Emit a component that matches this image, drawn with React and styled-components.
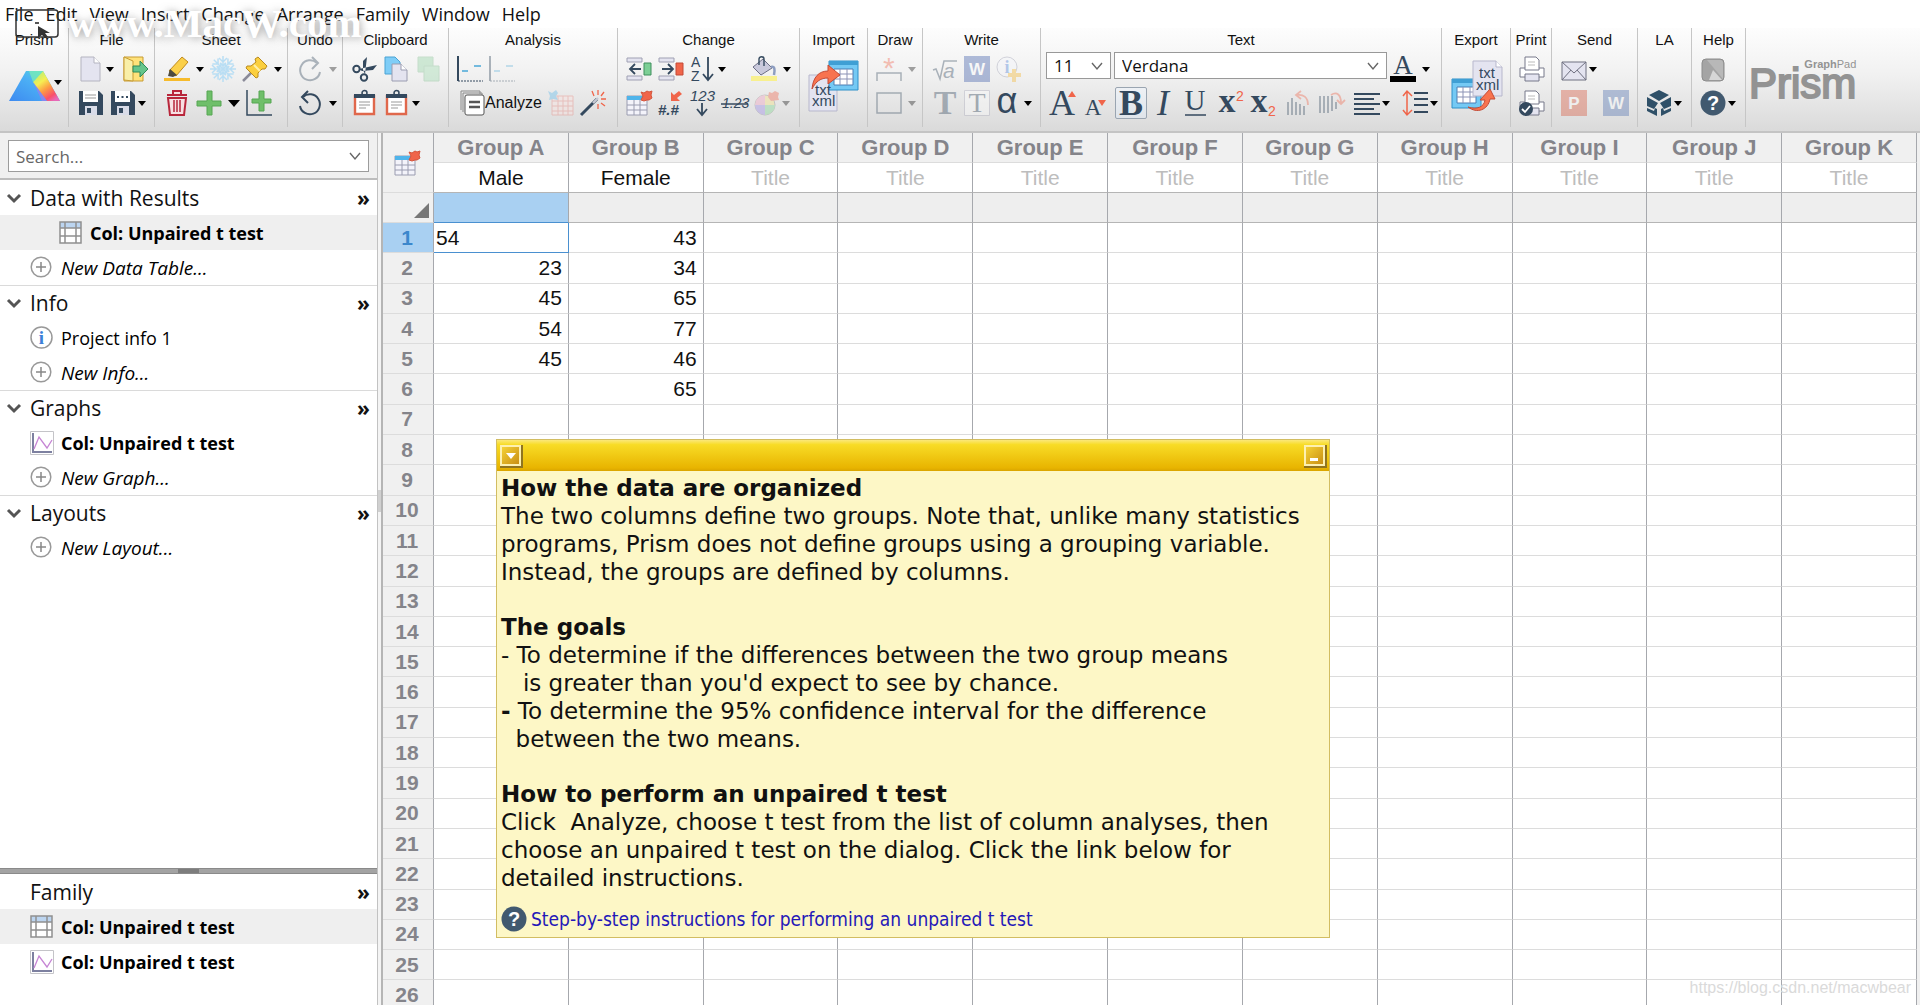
import React from "react";
import styled, { createGlobalStyle, css } from "styled-components";

const GlobalStyle = createGlobalStyle`
  * {
    box-sizing: border-box;
  }
  body {
    margin: 0;
    background: #fff;
    color: #111;
    font-family: "Open Sans", "Noto Sans", sans-serif;
    overflow: hidden;
  }
  button, input, select {
    margin: 0;
    padding: 0;
    border: 0;
    border-radius: 0;
    background: none;
    color: inherit;
    font: inherit;
  }
  svg {
    display: block;
    flex: none;
    overflow: visible;
  }
`;

const navy = "#34495e";
const red = "#f0654a";
const lilac = "#e4e4f0";
const edge = "#9a9cb0";

/* ---------- layout ---------- */

const Window = styled.div`
  display: flex;
  flex-direction: column;
  height: 100vh;
`;

const MenuBar = styled.nav`
  display: flex;
  gap: 12px;
  height: 28px;
  padding-left: 5px;
  flex: none;
  button {
    font-size: 18px;
    line-height: 28px;
  }
`;

const Ribbon = styled.header`
  display: flex;
  flex: none;
  height: 105px;
  padding-bottom: 4px;
  background: linear-gradient(#fdfdfd, #f1f1f1 45%, #dadada);
  border-bottom: 2px solid #c4c4c4;
`;

const GroupBox = styled.section`
  width: ${p => p.$w}px;
  flex: none;
  border-right: 1px solid #c6c6c6;
`;

const GroupTitle = styled.h2`
  margin: 0;
  font: 15px/24px "Liberation Sans", Arial, sans-serif;
  text-align: center;
`;

const Row = styled.div`
  display: flex;
  align-items: center;
  gap: ${p => p.$gap || 6}px;
  height: ${p => (p.$tall ? 68 : 34)}px;
  padding: 0 8px 0 ${p => p.$pad || 9}px;
`;

const Cluster = styled.div`
  display: flex;
  align-items: center;
  gap: 6px;
`;

const Spacer = styled.span`
  flex: 1;
`;

const Tool = styled.button`
  display: flex;
  align-items: center;
  justify-content: center;
  flex: none;
  min-width: 26px;
  height: 28px;
  opacity: ${p => (p.$dim ? 0.38 : 1)};
  ${p =>
    p.$on &&
    css`
      width: 32px;
      height: 32px;
      margin: 0 -3px;
      border: 1px solid #9aa5b1;
      border-radius: 2px;
      background: linear-gradient(#eef1f5, #dfe4ea);
    `}
`;

const AnalyzeButton = styled(Tool)`
  font: 16px "Liberation Sans", Arial, sans-serif;
`;

const DropButton = styled.button`
  width: ${p => (p.$wide ? 12 : 8)}px;
  height: 28px;
  flex: none;
  margin: ${p => (p.$tight ? "0 2px 0 -4px" : "0")};
  opacity: ${p => (p.$dim ? 0.35 : 1)};
  &::before {
    content: "";
    display: block;
    border-style: solid;
    border-color: #000 transparent transparent;
    border-width: ${p => (p.$wide ? "7px 6px 0" : "5px 4px 0")};
  }
`;

/* the Prism arrow sits over the slope of the logo */
const LogoDrop = styled(DropButton)`
  margin: 0 0 8px -13px;
`;

const Field = styled.div`
  display: flex;
  align-items: center;
  position: relative;
  align-self: flex-start;
  width: ${p => p.$w}px;
  height: 27px;
  border: 1px solid #999;
  background: #fff;
  select {
    width: 100%;
    height: 25px;
    padding-left: 7px;
    appearance: none;
    font-size: 17px;
    outline: 0;
  }
  svg {
    position: absolute;
    right: 7px;
    pointer-events: none;
  }
`;

const Brand = styled.div`
  padding: 30px 0 0 3px;
  color: #939393;
  font-family: "Liberation Sans", Arial, sans-serif;
  p {
    margin: 0;
    text-align: right;
    font-size: 11px;
    line-height: 12px;
    font-weight: bold;
  }
  span {
    font-weight: normal;
  }
  strong {
    display: block;
    font-size: 42px;
    font-weight: normal;
    line-height: 28px;
    -webkit-text-stroke: 2px #939393;
  }
`;

const Workspace = styled.main`
  display: flex;
  flex: 1;
  min-height: 0;
`;

const Sidebar = styled.aside`
  display: flex;
  flex-direction: column;
  width: 377px;
  flex: none;
`;

const SearchBar = styled.div`
  padding: 7px 8px 6px;
  background: #f0f0f0;
  border-bottom: 2px solid #bdbdbd;
`;

const SearchBox = styled.label`
  display: flex;
  align-items: center;
  height: 32px;
  padding: 0 7px;
  border: 1px solid #9c9c9c;
  background: #fff;
  input {
    flex: 1;
    font-size: 17px;
    outline: 0;
  }
  input::placeholder {
    color: #666;
    opacity: 1;
  }
`;

const Tree = styled.div`
  flex: 1;
`;

const SectionHead = styled.div`
  display: flex;
  align-items: center;
  height: 35px;
  padding: 0 7px 0 7px;
  h3 {
    flex: 1;
    margin: 0 0 0 9px;
    font-size: 21px;
    font-weight: normal;
    line-height: 34px;
  }
  button {
    font-size: 21px;
    font-weight: bold;
    line-height: 28px;
  }
`;

const Section = styled.section`
  & + & ${SectionHead} {
    border-top: 1px solid #dadada;
  }
`;

const Blank = styled.span`
  width: 14px;
`;

const Item = styled.button`
  display: flex;
  align-items: center;
  gap: 8px;
  width: 100%;
  height: 35px;
  padding-left: ${p => (p.$deep ? 59 : 30)}px;
  font-size: ${p => (p.$italic ? 19 : 18)}px;
  font-weight: ${p => (p.$bold ? "bold" : "normal")};
  font-style: ${p => (p.$italic ? "italic" : "normal")};
  color: #000;
  background: ${p => (p.$active ? "#efefef" : "none")};
`;

const PaneDivider = styled.div`
  height: 6px;
  background: #a3a3a3;
  border-top: 1px solid #8a8a8a;
  border-bottom: 1px solid #8a8a8a;
  &::before {
    content: "";
    display: block;
    width: 21px;
    height: 4px;
    margin: 0 auto;
    background: #7d7d7d;
  }
`;

const FamilyPane = styled.div`
  height: 131px;
`;

const Splitter = styled.div`
  display: flex;
  align-items: center;
  width: 6px;
  flex: none;
  padding-bottom: 137px;
  border-left: 1px solid #c2c2c2;
  border-right: 2px solid #b5b5b5;
  background: #f4f4f4;
  &::before {
    content: "";
    width: 4px;
    height: 22px;
    background: #d0d0d0;
  }
`;

const Sheet = styled.div`
  position: relative;
  flex: 1;
  overflow: hidden;
  padding-right: 3px;
  background: #f0f0f0;
`;

const Grid = styled.table`
  width: 100%;
  height: calc(100% + 6px);
  table-layout: fixed;
  border-collapse: separate;
  border-spacing: 0;
  background: #fff;
  font: 21px/24px "Liberation Sans", Arial, sans-serif;
  th,
  td {
    height: 30px;
    padding: 0 6px 0 0;
    border-right: 1px solid #a6a8ad;
    border-bottom: 1px solid #dcdcdc;
    text-align: right;
  }
`;

const NumberCol = styled.col`
  width: 51px;
`;

const CornerCell = styled.th`
  background: #f0f0f0;
  && {
    padding: 0 0 0 11px;
  }
`;

const SelectAll = styled.th`
  background: #f0f0f0;
  &::before {
    content: "";
    display: block;
    margin: 6px 0 0 31px;
    width: 0;
    border-style: solid;
    border-width: 0 0 15px 15px;
    border-color: transparent transparent #777;
  }
  && {
    padding: 0;
  }
`;

const GroupHead = styled.th`
  color: #84848a;
  background: #f0f0f0;
  font-size: 22px;
  && {
    padding: 0;
    text-align: center;
  }
`;

const TitleCell = styled.td`
  color: ${p => (p.$empty ? "#bdbdbd" : "#111")};
  && {
    padding: 0;
    text-align: center;
    border-bottom-color: #b5b5b5;
  }
`;

const SubHead = styled.td`
  background: ${p => (p.$active ? "#a9d0f2" : "#eeeeee")};
  && {
    border-bottom-color: ${p => (p.$active ? "#4a90d0" : "#b5b5b5")};
  }
`;

const RowHead = styled.th`
  color: ${p => (p.$active ? "#3b87cc" : "#84848a")};
  background: ${p => (p.$active ? "#a9d0f2" : "#f0f0f0")};
  && {
    padding: 0 2px 0 0;
    text-align: center;
  }
`;

const EditCell = styled.td`
  && {
    padding: 0;
    border-color: #4a90d0;
  }
  input {
    display: block;
    width: 100%;
    height: 28px;
    padding-left: 2px;
    outline: 0;
  }
`;

const Note = styled.article`
  position: absolute;
  left: 113px;
  top: 306px;
  width: 834px;
  border: 1px solid #d2bd62;
  background: #fdf7c6;
  color: #111;
  font: 23px/28px "DejaVu Sans", Verdana, sans-serif;
`;

const NoteBar = styled.div`
  display: flex;
  justify-content: space-between;
  align-items: center;
  height: 31px;
  padding: 0 4px 0 3px;
  background: linear-gradient(#fbe87a, #f8dc26 15%, #e8b400 90%, #d9a400);
  button {
    display: flex;
    align-items: center;
    justify-content: center;
    width: 21px;
    height: 21px;
    border: 2px solid #fdf0b0;
    background: linear-gradient(135deg, #f5d236, #c98f14);
    box-shadow: 1px 1px 0 1px #8f7420;
  }
`;

const NoteBody = styled.div`
  padding: 3px 4px 4px;
  h4,
  p {
    margin: 0;
    font-size: 23px;
    white-space: pre;
  }
  h4 {
    font-weight: bold;
  }
  p + h4 {
    margin-top: 27px;
  }
  a {
    display: flex;
    align-items: center;
    gap: 4px;
    margin-top: 13px;
    color: #2418b8;
    font: 19px/28px "DejaVu Sans Condensed", "DejaVu Sans", sans-serif;
    text-decoration: none;
  }
`;

const SiteMark = styled.div`
  position: absolute;
  left: 15px;
  top: 0;
  display: flex;
  align-items: flex-start;
  gap: 8px;
  color: #fff;
  font: bold 41px/46px "Liberation Serif", "Times New Roman", serif;
  text-shadow: 1px 1px 8px rgba(80, 80, 80, 0.55);
  pointer-events: none;
  svg {
    margin-top: 9px;
  }
`;

const SourceMark = styled.div`
  position: absolute;
  right: 9px;
  bottom: 7px;
  color: #dadada;
  font: 16px/20px "Liberation Sans", Arial, sans-serif;
  pointer-events: none;
`;

/* ---------- icons ---------- */

const Svg = ({ w = 26, h = 26, children, ...rest }) => (
  <svg width={w} height={h} viewBox={`0 0 ${w} ${h}`} fill="none" {...rest}>
    {children}
  </svg>
);

const T = ({ size = 12, fill = navy, family = "Liberation Sans", ...rest }) => (
  <text fontSize={size} fill={fill} fontFamily={`"${family}"`} {...rest} />
);

const Chevron = ({ color = "#666", w = 12, sw = 1.4 }) => (
  <Svg w={w} h={8}>
    <path d={`M1 1l${w / 2 - 1} 6 ${w / 2 - 1}-6`} stroke={color} strokeWidth={sw} />
  </Svg>
);

const PrismIcon = () => (
  <Svg w={52} h={30}>
    <defs>
      <linearGradient id="blueSide" x1="0" y1="1" x2="1" y2="0">
        <stop offset="0" stopColor="#3d8af0" />
        <stop offset="0.55" stopColor="#4cb0f5" />
        <stop offset="1" stopColor="#5ceacb" />
      </linearGradient>
      <linearGradient id="warmSide" x1="0.1" y1="0" x2="0.75" y2="1">
        <stop offset="0" stopColor="#a8f07e" />
        <stop offset="0.35" stopColor="#f6ee52" />
        <stop offset="0.6" stopColor="#fd9a43" />
        <stop offset="0.85" stopColor="#f9506a" />
        <stop offset="1" stopColor="#e768b8" />
      </linearGradient>
    </defs>
    <path d="M17 0H34L51 30H0z" fill="url(#blueSide)" />
    <path d="M34 0L51 30H38L24 11z" fill="url(#warmSide)" />
    <path d="M24 11L34 0H20z" fill="#7cf0b4" opacity=".7" />
    <path d="M24 11L38 30H33z" fill="#c06cf0" opacity=".5" />
  </Svg>
);

const PageIcon = () => (
  <Svg>
    <path d="M3 1h13l6 6v18H3z" fill={lilac} stroke="#b4b4c0" />
    <path d="M16 1v6h6" fill="#fff" stroke="#b4b4c0" />
  </Svg>
);

const OpenIcon = () => (
  <Svg>
    <path d="M2 1h19v24H2z" fill="#ffe27a" stroke="#c79b32" />
    <path d="M2 1l9 4v20l-9-1z" fill="#f9efa8" stroke="#c79b32" />
    <path d="M11 10h7V5l8 8-8 8v-5h-7z" fill="#65c58c" stroke="#2e8a5a" />
  </Svg>
);

const SaveIcon = ({ dots }) => (
  <Svg>
    <path d="M1 1h20l4 4v20H1z" fill={navy} />
    <path d="M5 1h15v11H5z" fill="#fff" />
    {dots ? (
      <path d="M7 7h2M11.500 7h2M16 7h2" stroke={navy} strokeWidth="2" />
    ) : (
      <path d="M7 5h11M7 8h11" stroke="#999" />
    )}
    <path d="M7 16h12v9H7z" fill="#d9dce8" />
    <path d="M9 18h4v5H9z" fill={navy} />
  </Svg>
);

const MarkerIcon = () => (
  <Svg>
    <path d="M0 22h26v3H0z" fill="#f6bb2c" />
    <path d="M18 1l6 5-12 14-7-5z" fill="#fbd04a" stroke="#c08a1c" />
    <path d="M6 13l7 6-4 2-5-1z" fill="#4d4a40" />
  </Svg>
);

const SnowIcon = () => (
  <Svg>
    <g stroke="#b9def4" strokeWidth="1.500">
      {[0, 45, 90, 135].map(a => (
        <g key={a} transform={`rotate(${a} 13 13)`}>
          <path d="M13 0v26M9 2l4 4 4-4M9 24l4-4 4 4M10 7l3 3 3-3M10 19l3-3 3 3" />
        </g>
      ))}
    </g>
  </Svg>
);

const PinIcon = () => (
  <Svg>
    <path d="M1 25l10-10" stroke="#8b8b99" strokeWidth="2.500" />
    <path d="M13 3l3-2 9 9-2 3-3 0-4 4 0 4-2 1L4 12l1-2h4l5-4z" fill="#fbcf3f" stroke="#b98a1e" />
    <path d="M12 9l6 6" stroke="#fff0a8" strokeWidth="2" />
  </Svg>
);

const TrashIcon = () => (
  <Svg>
    <path d="M9 4V1h8v3M3 5h20M4 8h18l-2 17H6z" stroke="#b8263b" strokeWidth="2" fill="#f7dfe2" />
    <path d="M10 10v12M13 10v12M16 10v12" stroke="#b8263b" strokeWidth="1.500" />
  </Svg>
);

const PlusIcon = () => (
  <Svg>
    <path d="M11 1h5v10h9v5h-9v9h-5v-9H1v-5h10z" fill="#6fbf6a" stroke="#57a653" />
  </Svg>
);

const AxisPlusIcon = () => (
  <Svg>
    <path d="M1 0v25h25" stroke={navy} strokeWidth="1.500" />
    <path d="M13 1h5v8h7v4h-7v8h-5v-8H6V9h7z" fill="#6fbf6a" stroke="#57a653" />
  </Svg>
);

const UndoIcon = ({ flip }) => (
  <Svg>
    <g transform={flip ? "translate(26 0) scale(-1 1)" : undefined} stroke={navy} strokeWidth="2">
      <path d="M6 7a10 10 0 1 1-3 9" />
      <path d="M11 1L5 7l6 6" />
    </g>
  </Svg>
);

const ScissorsIcon = () => (
  <Svg>
    <circle cx="4.500" cy="13" r="3.200" stroke={navy} strokeWidth="2" />
    <circle cx="12" cy="21.500" r="3.200" stroke={navy} strokeWidth="2" />
    <path d="M7 13l18-4-4 5-11 1zM13 18l2-17-4 4 0 9z" fill={navy} />
  </Svg>
);

const CopyIcon = () => (
  <Svg>
    <path d="M1 1h10l5 5v12H1z" fill="#7fcdf7" stroke="#4aa3d4" />
    <path d="M8 8h9l6 6v11H8z" fill={lilac} stroke={edge} />
    <path d="M17 8v6h6" fill="#fff" stroke={edge} />
  </Svg>
);

const DuplicateIcon = () => (
  <Svg>
    <path d="M2 1h15v15H2z" fill="#8fd3a0" stroke="#7cba8a" />
    <path d="M8 10h15v15H8z" fill="#9edbae" stroke="#7cba8a" />
  </Svg>
);

const PasteIcon = () => (
  <Svg>
    <path d="M3 6h19v18H3z" fill="#fff" stroke="#e0684c" strokeWidth="2.400" />
    <path d="M2 4h21v4H2z" fill={navy} />
    <circle cx="12.500" cy="3" r="2.500" stroke={navy} strokeWidth="1.500" />
    <path d="M7 12h11M7 15h11M7 18h7" stroke="#999" />
  </Svg>
);

const PlotIcon = () => (
  <Svg>
    <path d="M1 0v25" stroke={navy} strokeWidth="2" />
    <path d="M1 25h25" stroke={navy} strokeDasharray="2 1" />
    <path d="M5 15h6M17 10h7" stroke="#49a8d8" strokeWidth="1.600" />
  </Svg>
);

const AnalyzeIcon = () => (
  <Svg w={28}>
    <path d="M4 20V1h19v3" stroke="#8a8a8a" />
    <path d="M6 22V3h19v3" stroke="#8a8a8a" />
    <rect x="8" y="5" width="19" height="20" rx="2" fill="#fff" stroke="#555" />
    <path d="M12 12h11M12 17h11" stroke="#555" strokeWidth="2.500" />
  </Svg>
);

/* small table with the red arrow used for the "change" commands */
const TableIcon = () => (
  <Svg>
    <path d="M1 6h20v19H1z" fill="#f3f3fa" stroke={edge} />
    <path d="M1 6h20v4H1z" fill="#4fb4ea" />
    <path d="M1 15h20M1 20h20M8 10v15M14 10v15" stroke={edge} />
    <path d="M15 2l3 1 3-2 2 1 3-1-1 4 1 3-3 2-2 0-3 1-3-1 2-4z" fill={red} stroke="#d4553c" />
  </Svg>
);

const PinkTableIcon = () => (
  <Svg>
    <path d="M4 6h21v19H4z" fill="#fde3e0" stroke="#e9827b" />
    <path d="M4 11h21M4 16h21M4 21h21M10 6v19M15 6v19M20 6v19" stroke="#e9827b" />
    <path d="M0 1l4 2 4-3 2 3-2 3 2 4-5-1-4 1 1-4z" fill="#5bb8ea" />
  </Svg>
);

const WandIcon = () => (
  <Svg>
    <path d="M1 25L17 9" stroke={navy} strokeWidth="3" />
    <path d="M13 13l5-5" stroke="#c6c9d4" strokeWidth="2.400" />
    <path d="M12 1l2 5M18 0v5M24 2l-3 4M26 9h-5M25 16l-4-3M18 19v-5" stroke={red} strokeWidth="1.300" />
  </Svg>
);

const InsertIcon = ({ remove }) => (
  <Svg>
    <path d="M1 2h15v4H1zM1 20h15v4H1z" fill={lilac} stroke="#9fa0b3" />
    <path d="M18 7h7v12h-7z" fill={remove ? red : "#7ccf95"} stroke={remove ? "#c44b36" : "#3f8f5c"} />
    <path d={remove ? "M4 13h11M10 8l5 5-5 5" : "M4 13h11M9 8l-5 5 5 5"} stroke={navy} strokeWidth="1.800" />
  </Svg>
);

const SortIcon = () => (
  <Svg>
    <T x="1" y="11" size={14}>A</T>
    <T x="1" y="25" size={14}>Z</T>
    <path d="M18 1v23M13 18l5 6 5-6" stroke={navy} strokeWidth="1.800" />
  </Svg>
);

const BucketIcon = () => (
  <Svg>
    <path d="M0 20h26v5H0z" fill="#f8f08f" />
    <path d="M2 11l10-8 9 9-11 7z" fill="#c9c9dc" stroke="#6d6f86" />
    <path d="M8 9V3c0-3 5-3 5 0v7" stroke={navy} strokeWidth="1.400" />
    <path d="M20 11c4-1 4 3 3 8" stroke="#8d9dc0" strokeWidth="2.500" />
  </Svg>
);

const DecimalsIcon = () => (
  <Svg>
    <path d="M13 11V2l3 3 5-4 3 3-5 4 3 3z" fill={red} />
    <T x="0" y="25" size={15} fontWeight="bold" fontStyle="italic">#.#</T>
  </Svg>
);

const NumberIcon = () => (
  <Svg>
    <T x="0" y="11" size={15} fontStyle="italic">123</T>
    <path d="M12 13v11M7 19l5 6 5-6" stroke={navy} strokeWidth="1.800" />
  </Svg>
);

const StrikeIcon = () => (
  <Svg>
    <T x="0" y="18" size={14} fontStyle="italic">1.23</T>
    <path d="M-1 14h27" stroke={navy} strokeWidth="1.500" />
  </Svg>
);

const PaletteIcon = () => (
  <Svg>
    <circle cx="11" cy="15" r="10" fill="#f5e07a" stroke="#8a8a8a" />
    <path d="M11 15V5a10 10 0 0 0-10 10z" fill="#f2a0c0" />
    <path d="M11 15H1a10 10 0 0 0 10 10z" fill="#9a8ae8" />
    <path d="M11 15v10a10 10 0 0 0 10-10z" fill="#80d890" />
    <path d="M15 2l3 1 3-2 4 2-1 4 1 3-8 1-3-4z" fill={red} />
  </Svg>
);

const BigTable = () => (
  <>
    <path d="M0 0h29v29H0z" fill="#74c9f4" stroke="#2f90c8" />
    <path d="M0 0h29v4H0z" fill="#3f9fd4" />
    <path d="M5 8h19v16H5z" fill="#fff" stroke="#4a7fb5" />
    <path d="M5 13h19M5 18h19M11 8v16M18 8v16" stroke="#8c93b5" />
  </>
);

const ImportIcon = () => (
  <Svg w={52} h={52}>
    <path d="M1 15h28v36H1z" fill={lilac} stroke="#b7b7cc" />
    <g transform="translate(21 1)"><BigTable /></g>
    <T x="7" y="35" size={15}>txt</T>
    <T x="4" y="46" size={15}>xml</T>
    <path d="M4 29C5 17 11 11 20 11V5l12 10-12 9v-6c-7 0-12 3-16 11z" fill="#f8734f" stroke="#c44b36" />
  </Svg>
);

const ExportIcon = () => (
  <Svg w={52} h={52}>
    <g transform="translate(1 19)"><BigTable /></g>
    <path d="M22 1h23l6 6v29H22z" fill={lilac} stroke="#b7b7cc" />
    <path d="M45 1v6h6" fill="#fff" stroke="#b7b7cc" />
    <T x="28" y="18" size={15}>txt</T>
    <T x="25" y="30" size={15}>xml</T>
    <path d="M17 47c9 7 20 3 22-8h5L39 29 29 40h5c-1 7-8 10-17 7z" fill="#f8734f" stroke="#c44b36" />
  </Svg>
);

const BracketIcon = () => (
  <Svg>
    <T x="7" y="22" size={30} fill={red}>*</T>
    <path d="M1 25v-8h24v8" stroke={navy} strokeWidth="1.500" />
  </Svg>
);

const BoxIcon = () => (
  <Svg>
    <path d="M1 3h24v20H1z" stroke={navy} strokeWidth="1.500" />
  </Svg>
);

const RootIcon = () => (
  <Svg>
    <path d="M1 14l3-1 4 10 4-18h13" stroke={navy} strokeWidth="1.500" />
    <T x="11" y="22" size={21} fontStyle="italic">a</T>
  </Svg>
);

const OfficeIcon = ({ letter, color }) => (
  <Svg>
    <path d="M0 0h26v26H0z" fill={color} />
    <T x="13" y="19" size={17} fill="#fff" fontWeight="bold" textAnchor="middle">{letter}</T>
  </Svg>
);

const InfoPlusIcon = () => (
  <Svg>
    <circle cx="11" cy="11" r="10" fill="#f4f6fc" stroke={edge} />
    <T x="11" y="17" size={18} fill="#4a80d8" family="Liberation Serif" fontWeight="bold" textAnchor="middle">i</T>
    <path d="M16 13h4v4h5v4h-5v5h-4v-5h-4v-4h4z" fill="#f5b62e" />
  </Svg>
);

const Glyph = ({ ch, size = 32, x = 13, y = 24, boxed, children, ...rest }) => (
  <Svg>
    {boxed && <path d="M.5.5h25v25H.5z" fill="#fff" stroke="#aab" />}
    <T x={x} y={y} size={size} family="Liberation Serif" textAnchor="middle" {...rest}>{ch}</T>
    {children}
  </Svg>
);

const RotateIcon = ({ down }) => (
  <Svg>
    <path d={down ? "M2 6v17M6 6v17M10 6v17M14 6v15M18 12v7" : "M2 12v13M6 8v17M10 12v13M14 14v11M18 16v9"} stroke={navy} strokeWidth="1.800" />
    <path d={down ? "M13 5c6-4 10 0 10 8M19 10l4 4 4-4" : "M22 15C22 7 17 4 11 5M15 1l-5 4 5 4"} stroke={red} strokeWidth="1.800" />
  </Svg>
);

const AlignIcon = () => (
  <Svg>
    <path d="M0 4h26M0 9h20M0 14h26M0 19h20M0 24h26" stroke={navy} strokeWidth="1.800" />
  </Svg>
);

const SpacingIcon = () => (
  <Svg>
    <path d="M12 3h14M12 9h14M12 15h14M12 22h14" stroke={navy} strokeWidth="1.800" />
    <path d="M5 2v22M1 6l4-5 5 5M1 20l4 5 5-5" stroke={red} strokeWidth="1.500" />
  </Svg>
);

const PrinterIcon = ({ check }) => (
  <Svg>
    <path d="M1 12h24v9H1z" fill="#fff" stroke="#77798a" />
    <path d="M6 1h11l3 3v10H6z" fill="#fff" stroke="#77798a" />
    <path d="M9 6h7M9 9h7" stroke="#bbb" />
    <path d="M6 18h14v7H6z" fill={lilac} stroke="#77798a" />
    {check && (
      <>
        <circle cx="7" cy="19" r="7" fill={navy} />
        <path d="M3 19l3 3 5-6" stroke="#fff" strokeWidth="1.800" />
      </>
    )}
  </Svg>
);

const MailIcon = () => (
  <Svg>
    <path d="M1 6h24v18H1z" fill={lilac} stroke="#6f7080" />
    <path d="M1 6l12 11L25 6M1 24l9-10M25 24l-9-10" stroke="#6f7080" />
  </Svg>
);

const CubeIcon = () => (
  <Svg>
    <path d="M13 0l10 5-10 6L3 5zM1 7l11 6-4 6-7-3zM1 18l7 3 1-3 2 1v7L1 21zM25 7l-11 6 4 6 7-3zM25 18l-7 3-1-3-2 1v7l10-5z" fill="#2f5068" />
  </Svg>
);

const ShadeIcon = () => (
  <Svg>
    <rect x="2" y="3" width="22" height="22" rx="4" fill="#a4a4a4" stroke="#8c8c8c" />
    <path d="M7 4h13q3 0 3 3v16z" fill="#b8b8b8" />
    <path d="M13 14l9 10H9z" fill="#d6d6d6" />
  </Svg>
);

const HelpIcon = () => (
  <Svg>
    <circle cx="13" cy="13" r="12.500" fill="#41596f" />
    <T x="13" y="20" size={20} fill="#fff" fontWeight="bold" textAnchor="middle">?</T>
  </Svg>
);

const SheetIcon = () => (
  <Svg w={23} h={23}>
    <path d="M1 1h21v21H1z" fill="#fff" />
    <path d="M1 1h21v6H1z" fill="#bcd5f0" />
    <path d="M1 1h21v21H1zM1 7h21M1 15h21M6 1v21M17 1v21" stroke="#909090" strokeWidth="1.500" />
  </Svg>
);

const GraphIcon = () => (
  <Svg w={23} h={24}>
    <path d="M.5.5h23v23H.5z" fill="#fff" stroke="#c4c4c8" />
    <path d="M3 2v19h19" stroke="#7d80a0" strokeWidth="2" />
    <path d="M4 18L9 6l8 11 5-8" stroke="#c685d4" strokeWidth="1.300" />
  </Svg>
);

const AddIcon = () => (
  <Svg w={23} h={23}>
    <circle cx="11" cy="11" r="9.800" stroke="#999" strokeWidth="1.500" />
    <path d="M11 6v10M6 11h10" stroke="#888" strokeWidth="1.500" />
  </Svg>
);

const InfoIcon = () => (
  <Svg w={23} h={23}>
    <circle cx="11.500" cy="11.500" r="10.500" fill="#fff" stroke="#999" strokeWidth="1.500" />
    <T x="11.500" y="18" size={19} fill="#3d7fd8" family="Liberation Serif" fontWeight="bold" textAnchor="middle">i</T>
  </Svg>
);

/* ---------- parts ---------- */

const Group = ({ title, w, children }) => (
  <GroupBox $w={w}>
    <GroupTitle>{title}</GroupTitle>
    {children}
  </GroupBox>
);

const Btn = ({ label, dim, on, children }) => (
  <Tool type="button" aria-label={label} $dim={dim} $on={on}>
    {children}
  </Tool>
);

const Drop = ({ label, tight, wide, dim }) => (
  <DropButton type="button" aria-label={label} $tight={tight} $wide={wide} $dim={dim} />
);

function Toolbar() {
  return (
    <Ribbon>
      <Group title="Prism" w={69}>
        <Row $tall>
          <Btn label="Prism"><PrismIcon /></Btn>
          <LogoDrop type="button" aria-label="Prism options" />
        </Row>
      </Group>
      <Group title="File" w={86}>
        <Row>
          <Btn label="New file"><PageIcon /></Btn>
          <Drop tight label="New file options" />
          <Btn label="Open"><OpenIcon /></Btn>
        </Row>
        <Row>
          <Btn label="Save"><SaveIcon /></Btn>
          <Btn label="Save as"><SaveIcon dots /></Btn>
          <Drop tight label="Save options" />
        </Row>
      </Group>
      <Group title="Sheet" w={133}>
        <Row>
          <Btn label="Highlight"><MarkerIcon /></Btn>
          <Drop label="Highlight colors" />
          <Btn label="Freeze"><SnowIcon /></Btn>
          <Btn label="Pin"><PinIcon /></Btn>
          <Drop label="Pin options" />
        </Row>
        <Row>
          <Btn label="Delete sheet"><TrashIcon /></Btn>
          <Btn label="New sheet"><PlusIcon /></Btn>
          <Drop wide label="New sheet options" />
          <Btn label="New graph"><AxisPlusIcon /></Btn>
        </Row>
      </Group>
      <Group title="Undo" w={55}>
        <Row>
          <Btn dim label="Redo"><UndoIcon flip /></Btn>
          <Drop dim label="Redo list" />
        </Row>
        <Row>
          <Btn label="Undo"><UndoIcon /></Btn>
          <Drop label="Undo list" />
        </Row>
      </Group>
      <Group title="Clipboard" w={106}>
        <Row>
          <Btn label="Cut"><ScissorsIcon /></Btn>
          <Btn label="Copy"><CopyIcon /></Btn>
          <Btn dim label="Duplicate"><DuplicateIcon /></Btn>
        </Row>
        <Row>
          <Btn label="Paste"><PasteIcon /></Btn>
          <Btn label="Paste special"><PasteIcon /></Btn>
          <Drop tight label="Paste options" />
        </Row>
      </Group>
      <Group title="Analysis" w={169}>
        <Row $pad={8}>
          <Btn label="Graph data"><PlotIcon /></Btn>
          <Btn dim label="Graph results"><PlotIcon /></Btn>
        </Row>
        <Row $pad={8}>
          <AnalyzeButton type="button"><AnalyzeIcon />Analyze</AnalyzeButton>
          <Btn dim label="Change analysis"><PinkTableIcon /></Btn>
          <Btn label="Magic"><WandIcon /></Btn>
        </Row>
      </Group>
      <Group title="Change" w={182}>
        <Row $pad={8}>
          <Btn label="Insert"><InsertIcon /></Btn>
          <Btn label="Remove"><InsertIcon remove /></Btn>
          <Btn label="Sort"><SortIcon /></Btn>
          <Drop tight label="Sort options" />
          <Spacer />
          <Btn label="Fill"><BucketIcon /></Btn>
          <Drop label="Fill color" />
        </Row>
        <Row $pad={8}>
          <Btn label="Format table"><TableIcon /></Btn>
          <Btn label="Decimals"><DecimalsIcon /></Btn>
          <Btn label="Number format"><NumberIcon /></Btn>
          <Btn label="Exclude values"><StrikeIcon /></Btn>
          <Btn dim label="Color scheme"><PaletteIcon /></Btn>
          <Drop dim tight label="Color schemes" />
        </Row>
      </Group>
      <Group title="Import" w={68}>
        <Row $tall $pad={8}><Btn label="Import"><ImportIcon /></Btn></Row>
      </Group>
      <Group title="Draw" w={55}>
        <Row $pad={8}>
          <Btn dim label="Bracket"><BracketIcon /></Btn>
          <Drop dim label="Bracket styles" />
        </Row>
        <Row $pad={8}>
          <Btn dim label="Rectangle"><BoxIcon /></Btn>
          <Drop dim label="Shapes" />
        </Row>
      </Group>
      <Group title="Write" w={118}>
        <Row>
          <Btn dim label="Equation"><RootIcon /></Btn>
          <Btn dim label="Word object"><OfficeIcon letter="W" color="#3b5aa8" /></Btn>
          <Btn dim label="Insert info"><InfoPlusIcon /></Btn>
        </Row>
        <Row>
          <Btn dim label="Text"><Glyph ch="T" size={34} fontWeight="bold" /></Btn>
          <Btn dim label="Text box"><Glyph ch="T" size={28} y={22} boxed /></Btn>
          <Btn label="Symbol"><Glyph ch="α" size={36} x={11} y={23} family="Liberation Sans" /></Btn>
          <Drop tight label="Symbols" />
        </Row>
      </Group>
      <Group title="Text" w={401}>
        <Row $pad={5} $gap={3}>
          <Field $w={65}>
            <select aria-label="Font size" defaultValue="11"><option>11</option></select>
            <Chevron />
          </Field>
          <Field $w={273}>
            <select aria-label="Font" defaultValue="Verdana"><option>Verdana</option></select>
            <Chevron />
          </Field>
          <Cluster>
            <Btn label="Text color">
              <Glyph ch="A" size={27} y={18}>
                <path d="M0 20h26v6H0z" fill="#000" />
              </Glyph>
            </Btn>
            <Drop label="Text colors" />
          </Cluster>
        </Row>
        <Row $gap={10}>
          <Cluster>
            <Btn label="Grow font">
              <Glyph ch="A" size={36} x={12} y={25}><path d="M22 1l4 6h-8z" fill={red} /></Glyph>
            </Btn>
            <Btn label="Shrink font">
              <Glyph ch="A" size={23} x={11} y={25}><path d="M20 16l4-6h-8z" fill={red} /></Glyph>
            </Btn>
          </Cluster>
          <Cluster>
            <Btn on label="Bold"><Glyph ch="B" size={36} y={25} fontWeight="bold" /></Btn>
            <Btn label="Italic"><Glyph ch="I" size={36} y={25} fontStyle="italic" /></Btn>
            <Btn label="Underline">
              <Glyph ch="U" size={29} y={20}><path d="M3 25h21" stroke={navy} strokeWidth="1.500" /></Glyph>
            </Btn>
          </Cluster>
          <Cluster>
            <Btn label="Superscript">
              <Glyph ch="x" size={34} x={9} y={22} fontWeight="bold">
                <T x="18" y="11" size={14} fill={red}>2</T>
              </Glyph>
            </Btn>
            <Btn label="Subscript">
              <Glyph ch="x" size={34} x={9} y={22} fontWeight="bold">
                <T x="18" y="26" size={14} fill={red}>2</T>
              </Glyph>
            </Btn>
          </Cluster>
          <Cluster>
            <Btn dim label="Rotate up"><RotateIcon /></Btn>
            <Btn dim label="Rotate down"><RotateIcon down /></Btn>
          </Cluster>
          <Cluster>
            <Btn label="Align"><AlignIcon /></Btn>
            <Drop tight label="Alignments" />
          </Cluster>
          <Cluster>
            <Btn label="Line spacing"><SpacingIcon /></Btn>
            <Drop tight label="Line spacings" />
          </Cluster>
        </Row>
      </Group>
      <Group title="Export" w={69}>
        <Row $tall><Btn label="Export"><ExportIcon /></Btn></Row>
      </Group>
      <Group title="Print" w={41}>
        <Row $pad={8}><Btn label="Print"><PrinterIcon /></Btn></Row>
        <Row $pad={8}><Btn label="Print preview"><PrinterIcon check /></Btn></Row>
      </Group>
      <Group title="Send" w={86}>
        <Row>
          <Btn label="Mail"><MailIcon /></Btn>
          <Drop tight label="Mail options" />
        </Row>
        <Row>
          <Btn dim label="Send to PowerPoint"><OfficeIcon letter="P" color="#d8553a" /></Btn>
          <Spacer />
          <Btn dim label="Send to Word"><OfficeIcon letter="W" color="#4f70b0" /></Btn>
        </Row>
      </Group>
      <Group title="LA" w={54}>
        <Row />
        <Row $pad={8}>
          <Btn label="LabArchives"><CubeIcon /></Btn>
          <Drop tight label="LabArchives options" />
        </Row>
      </Group>
      <Group title="Help" w={54}>
        <Row $pad={8}><Btn label="Guide"><ShadeIcon /></Btn></Row>
        <Row $pad={8}>
          <Btn label="Help"><HelpIcon /></Btn>
          <Drop tight label="Help topics" />
        </Row>
      </Group>
      <Brand>
        <p>Graph<span>Pad</span></p>
        <strong>Prism</strong>
      </Brand>
    </Ribbon>
  );
}

const sections = [
  {
    title: "Data with Results",
    items: [
      { text: "Col: Unpaired t test", icon: SheetIcon, bold: true, deep: true, active: true },
      { text: "New Data Table...", icon: AddIcon, italic: true }
    ]
  },
  {
    title: "Info",
    items: [
      { text: "Project info 1", icon: InfoIcon },
      { text: "New Info...", icon: AddIcon, italic: true }
    ]
  },
  {
    title: "Graphs",
    items: [
      { text: "Col: Unpaired t test", icon: GraphIcon, bold: true },
      { text: "New Graph...", icon: AddIcon, italic: true }
    ]
  },
  {
    title: "Layouts",
    items: [{ text: "New Layout...", icon: AddIcon, italic: true }]
  }
];

const family = {
  title: "Family",
  plain: true,
  items: [
    { text: "Col: Unpaired t test", icon: SheetIcon, bold: true, active: true },
    { text: "Col: Unpaired t test", icon: GraphIcon, bold: true }
  ]
};

const TreeSection = ({ title, plain, items }) => (
  <Section>
    <SectionHead>
      {plain ? <Blank /> : <Chevron w={14} sw={3} color="#555" />}
      <h3>{title}</h3>
      <button type="button" aria-label={`Expand ${title}`}>»</button>
    </SectionHead>
    {items.map(({ text, icon: Icon, bold, italic, deep, active }, i) => (
      <Item key={i} type="button" $bold={bold} $italic={italic} $deep={deep} $active={active}>
        <Icon />
        {text}
      </Item>
    ))}
  </Section>
);

const letters = "ABCDEFGHIJK".split("");
const titles = { A: "Male", B: "Female" };
const data = {
  A: [54, 23, 45, 54, 45],
  B: [43, 34, 65, 77, 46, 65]
};
const rows = Array.from({ length: 26 }, (_, i) => i);

const DataTable = () => (
  <Grid>
    <colgroup>
      <NumberCol />
      {letters.map(l => <col key={l} />)}
    </colgroup>
    <thead>
      <tr>
        <CornerCell rowSpan={2}><TableIcon /></CornerCell>
        {letters.map(l => <GroupHead key={l}>Group {l}</GroupHead>)}
      </tr>
      <tr>
        {letters.map(l => (
          <TitleCell key={l} $empty={!titles[l]}>{titles[l] || "Title"}</TitleCell>
        ))}
      </tr>
      <tr>
        <SelectAll aria-label="Select all" />
        {letters.map(l => <SubHead key={l} $active={l === "A"} />)}
      </tr>
    </thead>
    <tbody>
      {rows.map(r => (
        <tr key={r}>
          <RowHead $active={r === 0}>{r + 1}</RowHead>
          {letters.map(l =>
            l === "A" && r === 0 ? (
              <EditCell key={l}><input aria-label="Male, row 1" defaultValue={data.A[0]} /></EditCell>
            ) : (
              <td key={l}>{data[l] && data[l][r]}</td>
            )
          )}
        </tr>
      ))}
    </tbody>
  </Grid>
);

const NoteCard = () => (
  <Note>
    <NoteBar>
      <button type="button" aria-label="Note menu">
        <Svg w={12} h={8}><path d="M1 1h10L6 7z" fill="#fff" /></Svg>
      </button>
      <button type="button" aria-label="Minimize note">
        <Svg w={14} h={12}><path d="M2 8h8v3H2z" fill="#fff" /></Svg>
      </button>
    </NoteBar>
    <NoteBody>
      <h4>How the data are organized</h4>
      <p>{`The two columns define two groups. Note that, unlike many statistics
programs, Prism does not define groups using a grouping variable.
Instead, the groups are defined by columns.`}</p>
      <h4>The goals</h4>
      <p>
        {`- To determine if the differences between the two group means
   is greater than you'd expect to see by chance.
`}
        <b>-</b>
        {` To determine the 95% confidence interval for the difference
  between the two means.`}
      </p>
      <h4>How to perform an unpaired t test</h4>
      <p>{`Click  Analyze, choose t test from the list of column analyses, then
choose an unpaired t test on the dialog. Click the link below for
detailed instructions.`}</p>
      <a href="#steps">
        <HelpIcon />
        Step-by-step instructions for performing an unpaired t test
      </a>
    </NoteBody>
  </Note>
);

export default function App() {
  return (
    <>
      <GlobalStyle />
      <Window>
        <MenuBar>
          {["File", "Edit", "View", "Insert", "Change", "Arrange", "Family", "Window", "Help"].map(m => (
            <button key={m} type="button">{m}</button>
          ))}
        </MenuBar>
        <Toolbar />
        <Workspace>
          <Sidebar>
            <SearchBar>
              <SearchBox>
                <input aria-label="Search" placeholder="Search..." />
                <Chevron />
              </SearchBox>
            </SearchBar>
            <Tree>
              {sections.map(s => <TreeSection key={s.title} {...s} />)}
            </Tree>
            <PaneDivider />
            <FamilyPane>
              <TreeSection {...family} />
            </FamilyPane>
          </Sidebar>
          <Splitter />
          <Sheet>
            <DataTable />
            <NoteCard />
          </Sheet>
        </Workspace>
      </Window>
      <SiteMark>
        <Svg w={44} h={30}>
          <rect x="1" y="1" width="42" height="27" rx="3" stroke="#333" strokeWidth="1.500" />
          <path d="M23 17v12l4-3 3 3 3-1-3-4h5z" fill="#333" />
          <path d="M20 14h4" stroke="#555" strokeWidth="2" />
        </Svg>
        www.MacW.com
      </SiteMark>
      <SourceMark>https://blog.csdn.net/macwbear</SourceMark>
    </>
  );
}
